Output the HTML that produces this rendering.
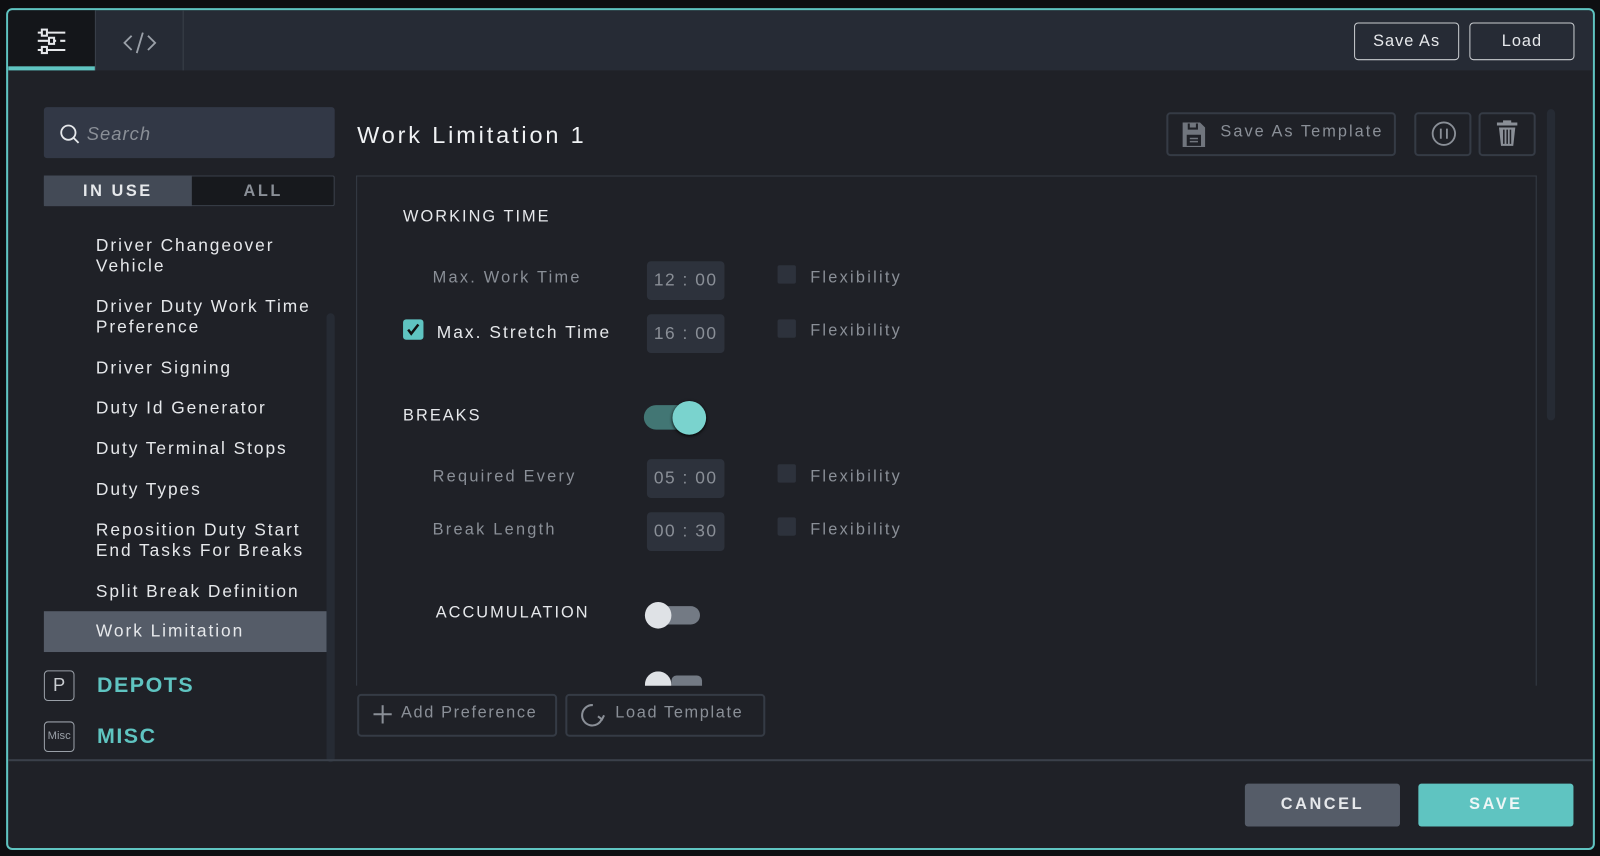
<!DOCTYPE html>
<html><head><meta charset="utf-8"><style>
*{box-sizing:border-box;margin:0;padding:0}
body{width:1600px;height:856px;background:#0e0f12;font-family:"Liberation Sans",sans-serif;position:relative;overflow:hidden;color:#e6e8eb}
#w{position:absolute;left:0;top:0;width:1568px;height:839px;transform:scale(1.0204);transform-origin:0 0}
.a{position:absolute}
.frame{left:6px;top:8px;width:1557px;height:825px;border:2px solid #5fc4c1;border-radius:6px;background:#1f2127;overflow:hidden}
.hdr{left:0;top:0;width:1553px;height:59px;background:#262b35}
.t{white-space:nowrap;letter-spacing:2px;margin-top:3px}
.btn{border:1.5px solid #c9ccd0;border-radius:4px;color:#e6e8eb;font-size:16px;text-align:center;letter-spacing:1px}
.gbtn{border:2px solid #353b45;border-radius:4px;color:#8a8f97}
.item{left:86px;font-size:17px;color:#e6e8eb;letter-spacing:1.9px;line-height:20px;white-space:nowrap;margin-top:0}
.lbl{font-size:16px;color:#8a8f97;letter-spacing:2.2px}
.time{width:76px;height:38px;background:#2d323c;border-radius:4px;color:#8a8f97;font-size:17px;text-align:center;line-height:38px;letter-spacing:1.5px}
.cb{width:18px;height:18px;background:#2d323c;border-radius:2px}
</style></head><body>
<div id="w">
<div class="a frame">
 <div class="a hdr"></div>
 <div class="a" style="left:0;top:0;width:85px;height:59px;background:#14161a;border-bottom:4px solid #5fc4c1"></div>
 <svg class="a" style="left:28px;top:17px" width="30" height="28" viewBox="0 0 30 28" fill="none" stroke="#e6e8eb" stroke-width="2"><path d="M1 5h4M11 5h17M1 13h10M17 13h2M23 13h5M1 22h4M11 22h17"/><rect x="5" y="2" width="5" height="6"/><rect x="12" y="10" width="5" height="6"/><rect x="5" y="19" width="5" height="6"/></svg>
 <div class="a" style="left:85px;top:0;width:1px;height:59px;background:#3a404a"></div>
 <div class="a" style="left:171px;top:0;width:1px;height:59px;background:#3a404a"></div>
 <svg class="a" style="left:112px;top:20px" width="34" height="24" viewBox="0 0 34 24" fill="none" stroke="#9aa0a8" stroke-width="1.8"><path d="M9 5L2 12l7 7M25 5l7 7-7 7M20 2l-6 20"/></svg>
 <div class="a btn" style="left:1319px;top:12px;width:103px;height:37px;line-height:36px">Save As</div>
 <div class="a btn" style="left:1432px;top:12px;width:103px;height:37px;line-height:36px">Load</div>

 <div class="a" style="left:35px;top:95px;width:285px;height:50px;background:#323846;border-radius:3px"></div>
 <svg class="a" style="left:50px;top:111px" width="22" height="22" viewBox="0 0 22 22" fill="none" stroke="#e6e8eb" stroke-width="1.8"><circle cx="9" cy="9" r="7"/><path d="M14 14l5 5"/></svg>
 <div class="a t" style="left:77px;top:108px;font-size:18px;font-style:italic;color:#8a8f97;letter-spacing:1px">Search</div>
 <div class="a" style="left:35px;top:162px;width:285px;height:30px;border:1.5px solid #3a404a;border-radius:2px;background:#17191d"></div>
 <div class="a" style="left:35px;top:162px;width:145px;height:30px;background:#434a56;font-size:16px;font-weight:bold;text-align:center;line-height:31px;letter-spacing:2.5px">IN USE</div>
 <div class="a" style="left:180px;top:162px;width:140px;height:30px;font-size:16px;font-weight:bold;text-align:center;line-height:31px;color:#8a8f97;letter-spacing:2.5px">ALL</div>

 <div class="a item" style="top:221px">Driver Changeover<br>Vehicle</div>
 <div class="a item" style="top:281px">Driver Duty Work Time<br>Preference</div>
 <div class="a item" style="top:341px">Driver Signing</div>
 <div class="a item" style="top:380px">Duty Id Generator</div>
 <div class="a item" style="top:420px">Duty Terminal Stops</div>
 <div class="a item" style="top:460px">Duty Types</div>
 <div class="a item" style="top:500px">Reposition Duty Start<br>End Tasks For Breaks</div>
 <div class="a item" style="top:560px">Split Break Definition</div>
 <div class="a" style="left:35px;top:589px;width:277px;height:40px;background:#555c68"></div>
 <div class="a item" style="top:599px">Work Limitation</div>
 <div class="a" style="left:312px;top:297px;width:8px;height:440px;background:#262b34;border-radius:4px"></div>
 <div class="a" style="left:35px;top:647px;width:30px;height:30px;border:1.5px solid #9aa0a8;border-radius:4px;color:#c9ccd0;font-size:18px;text-align:center;line-height:27px">P</div>
 <div class="a t" style="left:87px;top:647px;font-size:21px;font-weight:bold;color:#5fc4c1;letter-spacing:1.5px">DEPOTS</div>
 <div class="a" style="left:35px;top:697px;width:30px;height:30px;border:1.5px solid #9aa0a8;border-radius:4px;color:#9aa0a8;font-size:11px;text-align:center;line-height:27px">Misc</div>
 <div class="a t" style="left:87px;top:697px;font-size:21px;font-weight:bold;color:#5fc4c1;letter-spacing:1.5px">MISC</div>

 <div class="a t" style="left:342px;top:106px;font-size:23px;color:#f0f2f4;letter-spacing:2.8px">Work Limitation 1</div>
 <div class="a gbtn" style="left:1135px;top:100px;width:225px;height:43px"></div>
 <svg class="a" style="left:1150px;top:109px" width="24" height="26" viewBox="0 0 24 26" fill="#70757d"><path d="M1 1h17l5 5v19H1zM6 2v6h10V2h-2v4H8V2zM5 13v11h14V13zM8 16h8v1.5H8zM8 19h8v1.5H8z" fill-rule="evenodd"/></svg>
 <div class="a t" style="left:1188px;top:108px;font-size:16px;color:#8a8f97">Save As Template</div>
 <div class="a gbtn" style="left:1378px;top:100px;width:56px;height:43px"></div>
 <svg class="a" style="left:1394px;top:108px" width="26" height="26" viewBox="0 0 26 26" fill="none" stroke="#8a8f97" stroke-width="1.8"><circle cx="13" cy="13" r="11"/><path d="M10 8v10M16 8v10"/></svg>
 <div class="a gbtn" style="left:1441px;top:100px;width:56px;height:43px"></div>
 <svg class="a" style="left:1458px;top:107px" width="22" height="27" viewBox="0 0 22 27" fill="#8a8f97"><path d="M7 1h8v2h6v3H1V3h6zM3 8h16l-2 18H5zM7 10v14h1.5V10zM10.3 10v14h1.5V10zM13.5 10v14H15V10z" fill-rule="evenodd"/></svg>
 <div class="a" style="left:1508px;top:97px;width:8px;height:305px;background:#262b34;border-radius:4px"></div>

 <div class="a" style="left:341px;top:162px;width:1157px;height:500px;border:1.5px solid #353b45;border-bottom:none"></div>
 <div class="a t" style="left:387px;top:191px;font-size:16px;color:#e6e8eb">WORKING TIME</div>
 <div class="a lbl t" style="left:416px;top:251px">Max. Work Time</div>
 <div class="a time" style="left:626px;top:246px">12 : 00</div>
 <div class="a cb" style="left:754px;top:250px"></div>
 <div class="a lbl t" style="left:786px;top:251px">Flexibility</div>
 <div class="a" style="left:387px;top:303px;width:20px;height:20px;background:#5fc4c1;border-radius:3px"></div>
 <svg class="a" style="left:389px;top:305px" width="16" height="16" viewBox="0 0 16 16" fill="none" stroke="#111" stroke-width="2.4"><path d="M3 8l3 4 7-9"/></svg>
 <div class="a t" style="left:420px;top:303px;font-size:17px;color:#e6e8eb">Max. Stretch Time</div>
 <div class="a time" style="left:626px;top:298px">16 : 00</div>
 <div class="a cb" style="left:754px;top:303px"></div>
 <div class="a lbl t" style="left:786px;top:303px">Flexibility</div>

 <div class="a t" style="left:387px;top:386px;font-size:16px;color:#e6e8eb">BREAKS</div>
 <div class="a" style="left:623px;top:387px;width:58px;height:24px;background:#427674;border-radius:12px"></div>
 <div class="a" style="left:651px;top:383px;width:33px;height:33px;background:#7ad3ce;border-radius:50%;box-shadow:0 1px 3px #000"></div>
 <div class="a lbl t" style="left:416px;top:446px">Required Every</div>
 <div class="a time" style="left:626px;top:440px">05 : 00</div>
 <div class="a cb" style="left:754px;top:445px"></div>
 <div class="a lbl t" style="left:786px;top:446px">Flexibility</div>
 <div class="a lbl t" style="left:416px;top:498px">Break Length</div>
 <div class="a time" style="left:626px;top:492px">00 : 30</div>
 <div class="a cb" style="left:754px;top:497px"></div>
 <div class="a lbl t" style="left:786px;top:498px">Flexibility</div>

 <div class="a t" style="left:419px;top:579px;font-size:16px;color:#e6e8eb">ACCUMULATION</div>
 <div class="a" style="left:628px;top:584px;width:50px;height:18px;background:#737a84;border-radius:9px"></div>
 <div class="a" style="left:624px;top:580px;width:26px;height:26px;background:#dfe2e6;border-radius:50%"></div>
 <div class="a" style="left:624px;top:648px;width:26px;height:14px;overflow:hidden"><div style="width:26px;height:26px;background:#dfe2e6;border-radius:50%"></div></div>
 <div class="a" style="left:650px;top:652px;width:30px;height:10px;background:#737a84;border-radius:5px 5px 0 0"></div>

 <div class="a gbtn" style="left:342px;top:670px;width:196px;height:42px"></div>
 <svg class="a" style="left:358px;top:681px" width="18" height="18" viewBox="0 0 18 18" stroke="#8a8f97" stroke-width="2"><path d="M9 0v18M0 9h18"/></svg>
 <div class="a t" style="left:385px;top:677px;font-size:16px;color:#8a8f97;letter-spacing:1.6px">Add Preference</div>
 <div class="a gbtn" style="left:546px;top:670px;width:196px;height:42px"></div>
 <svg class="a" style="left:561px;top:678px" width="24" height="26" viewBox="0 0 24 26" fill="none" stroke="#8a8f97" stroke-width="2"><path d="M12 3A10 10 0 1 0 21 16"/><path d="M17 14l4 3 2-4"/></svg>
 <div class="a t" style="left:595px;top:677px;font-size:16px;color:#8a8f97;letter-spacing:1.6px">Load Template</div>

 <div class="a" style="left:0;top:734px;width:1553px;height:1.5px;background:#3a404a"></div>
 <div class="a" style="left:1212px;top:758px;width:152px;height:42px;background:#555c68;border-radius:3px;font-size:16px;font-weight:bold;text-align:center;line-height:42px;letter-spacing:2.5px;color:#e6e8eb">CANCEL</div>
 <div class="a" style="left:1382px;top:758px;width:152px;height:42px;background:#5fc4c1;border-radius:3px;font-size:16px;font-weight:bold;text-align:center;line-height:42px;letter-spacing:2.5px;color:#eef6f6">SAVE</div>
</div>
</div>
</body></html>
